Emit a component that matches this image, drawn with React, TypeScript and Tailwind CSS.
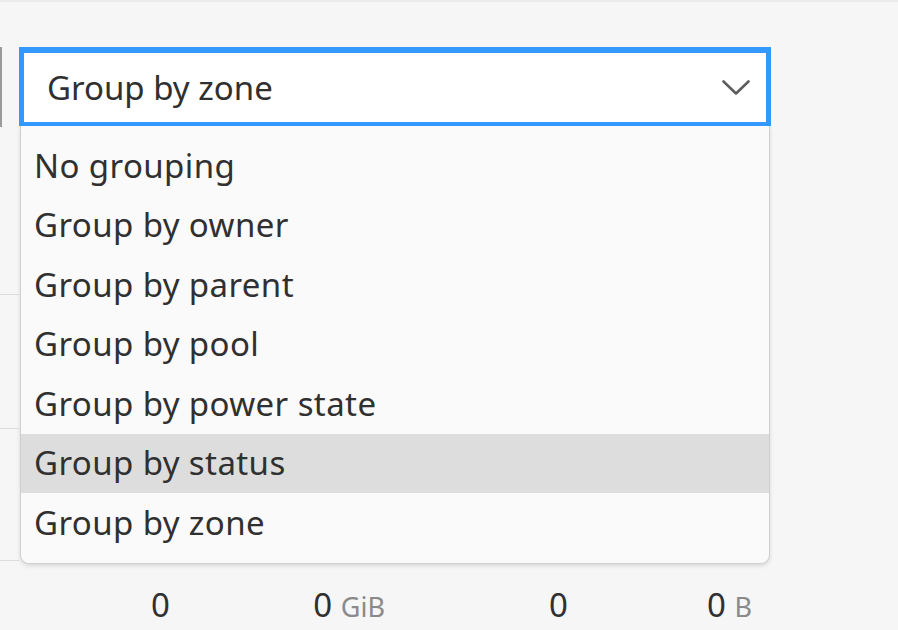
const options = [
	'No grouping',
	'Group by owner',
	'Group by parent',
	'Group by pool',
	'Group by power state',
	'Group by status',
	'Group by zone',
]

function Chevron() {
	return (
		<svg width="28" height="16" viewBox="0 0 28 16" fill="none" className="shrink-0">
			<path d="M1.5 1.5 L14 13.5 L26.5 1.5" stroke="#5e5e5e" strokeWidth="2.6" strokeLinecap="round" strokeLinejoin="round" />
		</svg>
	)
}

export default function App() {
	const highlighted = 'Group by status'

	return (
		<div className="w-[898px] h-[630px] overflow-hidden bg-[#f6f6f6] border-t-2 border-[#ebebeb] text-[#303030] font-['Noto_Sans',sans-serif]">
			<div className="flex">
				{/* left edge of the neighbouring control and table rows */}
				<div className="w-[19px] shrink-0 flex flex-col">
					<div className="mt-[45px] h-[80px] border-l-2 border-[#9b9b9b]" />
					<div className="h-[168px] border-b border-[#dcdcdc]" />
					<div className="h-[134px] border-b border-[#dcdcdc]" />
					<div className="h-[132px] border-b border-[#dcdcdc]" />
				</div>

				<div className="w-[752px] shrink-0 flex flex-col">
					<div className="relative mt-[45px]">
						<div className="h-[79px] flex items-center justify-between bg-white border-t-[6px] border-l-[5px] border-r-[5px] border-b-[4px] border-[#3399ff] pl-[23px] pr-[16px]">
							<span className="text-[33px] leading-[40px]">Group by zone</span>
							<Chevron />
						</div>

						<div className="absolute left-px right-px top-full pt-[10px] pb-[10px] bg-[#fafafa] border border-t-0 border-[#cfcfcf] rounded-b-[9px] shadow-[0_2px_4px_rgba(0,0,0,0.12)]">
							{options.map((o) => (
								<div
									key={o}
									className={`h-[59.5px] flex items-center pl-[13px] text-[33px] leading-[40px] tracking-[0.4px] ${o === highlighted ? 'bg-[#dddddd]' : ''}`}
								>
									{o}
								</div>
							))}
						</div>
					</div>

					<div className="mt-[459px] flex text-[33px] leading-[40px]">
						<div className="w-[151px] text-right">0</div>
						<div className="w-[215px] text-right">
							0 <span className="text-[27px] text-[#8a8a8a]">GiB</span>
						</div>
						<div className="w-[183px] text-right">0</div>
						<div className="w-[184px] text-right">
							0 <span className="text-[27px] text-[#8a8a8a]">B</span>
						</div>
					</div>
				</div>
			</div>
		</div>
	)
}
